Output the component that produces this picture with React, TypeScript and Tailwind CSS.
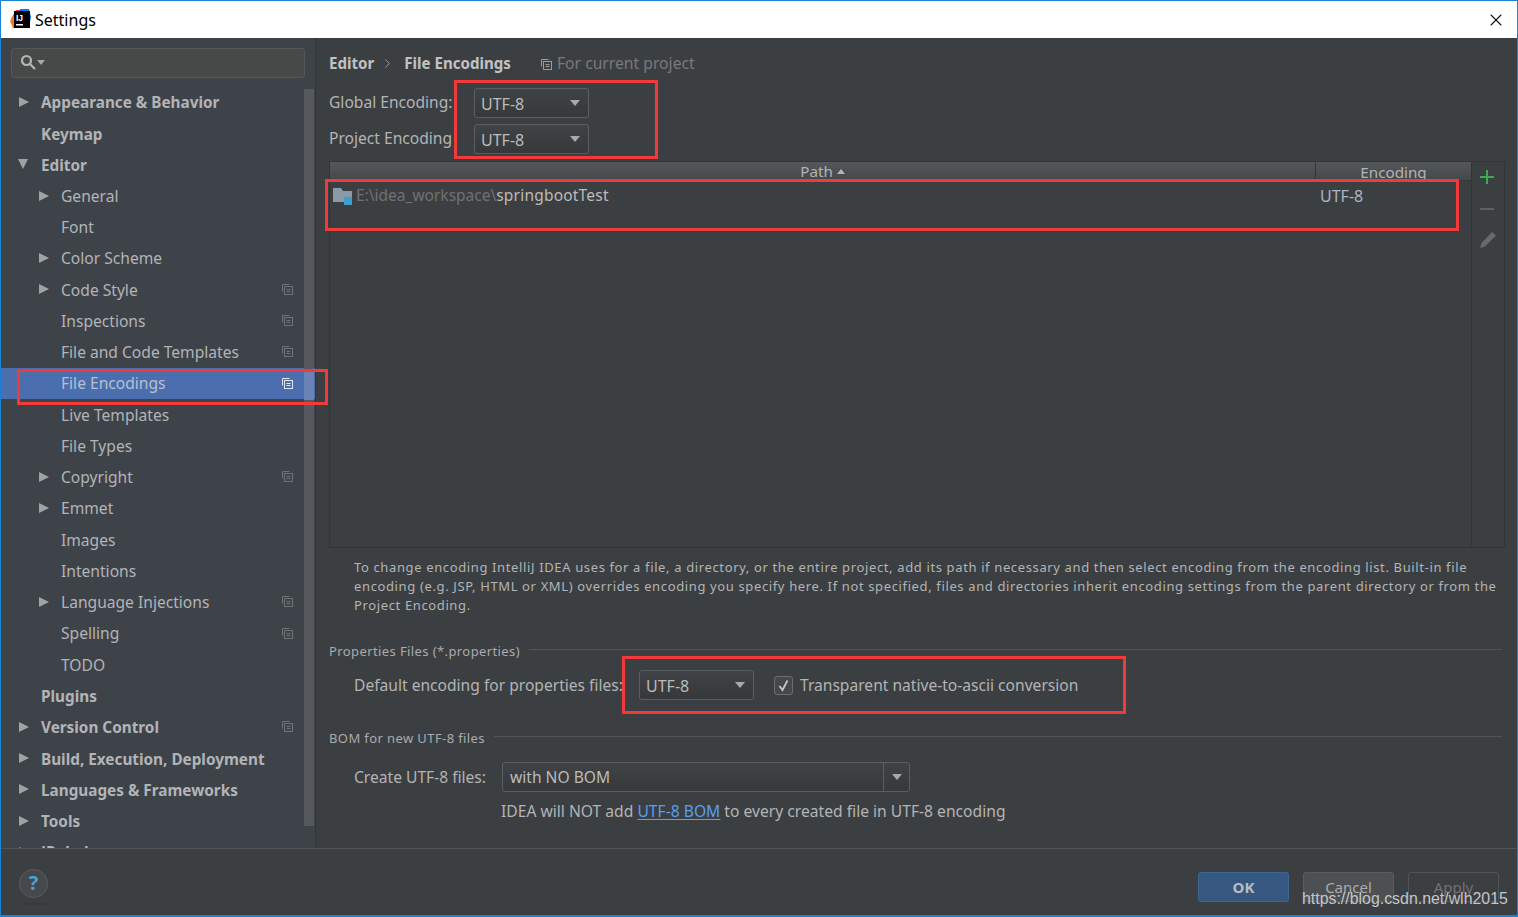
import { ChevronRight, X } from "lucide-react";

const treeRows = [
	{ label: "Appearance & Behavior", level: 0, arrow: "right" },
	{ label: "Keymap", level: 0 },
	{ label: "Editor", level: 0, arrow: "down" },
	{ label: "General", level: 1, arrow: "right" },
	{ label: "Font", level: 1 },
	{ label: "Color Scheme", level: 1, arrow: "right" },
	{ label: "Code Style", level: 1, arrow: "right", copy: true },
	{ label: "Inspections", level: 1, copy: true },
	{ label: "File and Code Templates", level: 1, copy: true },
	{ label: "File Encodings", level: 1, copy: true, selected: true },
	{ label: "Live Templates", level: 1 },
	{ label: "File Types", level: 1 },
	{ label: "Copyright", level: 1, arrow: "right", copy: true },
	{ label: "Emmet", level: 1, arrow: "right" },
	{ label: "Images", level: 1 },
	{ label: "Intentions", level: 1 },
	{ label: "Language Injections", level: 1, arrow: "right", copy: true },
	{ label: "Spelling", level: 1, copy: true },
	{ label: "TODO", level: 1 },
	{ label: "Plugins", level: 0 },
	{ label: "Version Control", level: 0, arrow: "right", copy: true },
	{ label: "Build, Execution, Deployment", level: 0, arrow: "right" },
	{ label: "Languages & Frameworks", level: 0, arrow: "right" },
	{ label: "Tools", level: 0, arrow: "right" },
	{ label: "JRebel", level: 0, arrow: "right" },
];

function CopyIcon({ color = "#6f7376" }: { color?: string }) {
	return (
		<svg width="12" height="12" viewBox="0 0 12 12" fill="none" stroke={color}>
			<path d="M8.5 1.5h-7v7" />
			<rect x="3.5" y="3.5" width="8" height="8" />
			<path d="M5.5 6.5h4M5.5 8.5h4" />
		</svg>
	);
}

function Caret({ color = "#a7a9aa" }: { color?: string }) {
	return <span className="w-0 h-0 border-x-[5px] border-x-transparent border-t-[6px]" style={{ borderTopColor: color }} />;
}

function Combo({ width, label }: { width: string; label: string }) {
	return (
		<div className={`${width} h-[30px] flex items-center justify-between pl-[6px] pr-[8px] rounded-[3px] border border-[#5c5f61] bg-gradient-to-b from-[#404345] to-[#36383a] text-[#bbbbbb] text-[16px]`}>
			<span className="mt-[2px]">{label}</span>
			<Caret />
		</div>
	);
}

function TreeRow({ row }: { row: (typeof treeRows)[number] }) {
	const top = row.level === 0;
	return (
		<div className={`relative h-[31.25px] flex items-center ${row.selected ? "bg-[#4b6eaf]" : ""}`}>
			{row.arrow === "right" && (
				<span className={`absolute ${top ? "left-[18px]" : "left-[38px]"} w-0 h-0 border-y-[5.5px] border-y-transparent border-l-[10px] border-l-[#a0a2a4]`} />
			)}
			{row.arrow === "down" && (
				<span className="absolute left-[17px] w-0 h-0 border-x-[5.5px] border-x-transparent border-t-[10px] border-t-[#a0a2a4]" />
			)}
			<span className={`${top ? "ml-[40px] font-bold text-[15.3px]" : "ml-[60px] text-[15.6px]"} mt-[2px] whitespace-nowrap ${row.selected ? "text-[#b6c0d0]" : "text-[#b2b4b6]"}`}>{row.label}</span>
			{row.copy && (
				<span className="absolute left-[280px] top-[9px]">
					<CopyIcon color={row.selected ? "#e4e8ee" : "#6f7376"} />
				</span>
			)}
		</div>
	);
}

export default function App() {
	return (
		<div className="relative w-[1518px] h-[917px] flex flex-col overflow-hidden border-x-[1px] border-t-[1px] border-b-[2px] border-[#1883d7] bg-[#3c3f41] text-[#bbbbbb]" style={{ fontFamily: '"Noto Sans", "Open Sans", sans-serif' }}>
			<header className="h-[37px] shrink-0 flex items-center bg-white">
				<svg className="ml-[9px]" width="21" height="21" viewBox="0 0 21 21">
					<path d="M1 10 6 1h6L6 19H3z" fill="#fe315d" />
					<path d="M0 12 4 6l4 13H3z" fill="#f97a12" />
					<path d="M10 0h9l2 8-2 11h-9z" fill="#087cfa" />
					<rect x="4" y="2" width="16" height="17" fill="#000" />
					<rect x="6" y="15" width="7" height="1.5" fill="#fff" />
					<text x="6" y="12" fontSize="8.5" fontWeight="700" fill="#fff" fontFamily="Liberation Sans">IJ</text>
				</svg>
				<span className="ml-[4px] text-[16px] text-black">Settings</span>
				<X className="ml-auto mr-[11px]" size={20} strokeWidth={1.3} color="#111" />
			</header>

			<div className="flex-1 min-h-0 flex">
				<aside className="relative w-[315px] shrink-0 bg-[#3e434a] border-r border-[#333537] overflow-hidden">
					<div className="mx-[10px] mt-[10px] h-[30px] flex items-center gap-[1px] pl-[8px] pb-[2px] rounded-[3px] border border-[#54585a] bg-[#464948]">
						<svg width="16" height="16" viewBox="0 0 16 16" fill="none" stroke="#b4b6b8" strokeWidth="2.2">
							<circle cx="6.5" cy="6.5" r="4.5" />
							<path d="m10 10 5 5" />
						</svg>
						<span className="w-0 h-0 border-x-[4px] border-x-transparent border-t-[5px] border-t-[#a7a9aa]" />
					</div>
					<nav className="mt-[8.25px] w-[314px]">
						{treeRows.map((row) => (
							<TreeRow key={row.label} row={row} />
						))}
					</nav>
					<div className="absolute left-[303px] top-[51px] w-[10px] h-[737px] bg-[#55585e]" />
					<div className="absolute left-[303px] top-[331px] w-[10px] h-[31px] bg-[#6a83b4]" />
				</aside>

				<main className="flex-1 min-w-0 pl-[13px] pr-[13px]">
					<div className="h-[50px] flex items-center pt-[1px] text-[15.1px]">
						<span className="font-bold text-[#c0c2c3]">Editor</span>
						<ChevronRight className="ml-[6px] mr-[9px]" size={15} strokeWidth={1.4} color="#a0a2a4" />
						<span className="font-bold text-[#c0c2c3]">File Encodings</span>
						<span className="ml-[29px] mr-[5px]"><CopyIcon color="#9a9c9e" /></span>
						<span className="text-[15.7px] text-[#77797b]">For current project</span>
					</div>
					<div className="flex items-center h-[30px]">
						<span className="w-[145px] text-[15.6px] text-[#b2b4b6] whitespace-nowrap">Global Encoding:</span>
						<Combo width="w-[115px]" label="UTF-8" />
					</div>
					<div className="flex items-center h-[30px] mt-[6px]">
						<span className="w-[145px] text-[15.6px] text-[#b2b4b6] whitespace-nowrap">Project Encoding</span>
						<Combo width="w-[115px]" label="UTF-8" />
					</div>

					<div className="mt-[7px] h-[387px] w-[1176px] flex border border-[#333537]">
						<div className="flex-1 min-w-0 flex flex-col">
							<div className="h-[19px] shrink-0 flex bg-gradient-to-b from-[#55585a] to-[#45484a] border-b border-[#333537] text-[15.2px] leading-[20px] text-[#b2b4b6]">
								<div className="w-[986px] flex items-center justify-center gap-[4px] border-r border-[#333537]">
									<span>Path</span>
									<span className="w-0 h-0 border-x-[4.5px] border-x-transparent border-b-[5px] border-b-[#b2b4b6]" />
								</div>
								<div className="flex-1 text-center">Encoding</div>
							</div>
							<div className="flex h-[30px] items-center text-[15.5px]">
								<svg className="ml-[3px]" width="20" height="18" viewBox="0 0 20 18">
									<path d="M0 1h8l2 3h9v11H0z" fill="#8a9aa6" />
									<rect x="11" y="10" width="8" height="8" fill="#3aa0d0" />
								</svg>
								<span className="ml-[3px] text-[#6f7174]">E:\idea_workspace\</span>
								<span className="text-[#bbbbbb] tracking-[0.2px]">springbootTest</span>
								<span className="ml-auto mr-[107px] -mt-[1px] w-[44px] text-[16px] text-[#a9b7c6] whitespace-nowrap">UTF-8</span>
							</div>
						</div>
						<div className="w-[33px] shrink-0 flex flex-col items-center border-l border-[#333537]">
							<svg className="mt-[7px] -ml-[2px]" width="16" height="16" viewBox="0 0 16 16" stroke="#3daa52" strokeWidth="2">
								<path d="M8 1v14M1 8h14" />
							</svg>
							<svg className="mt-[16px] -ml-[2px]" width="16" height="16" viewBox="0 0 16 16" stroke="#5f6264" strokeWidth="2">
								<path d="M1 8h14" />
							</svg>
							<svg className="mt-[15px]" width="16" height="16" viewBox="0 0 16 16" fill="#67696b">
								<path d="M12 0l4 3.500L5 14.500 0 16l1.500-5z" />
							</svg>
						</div>
					</div>

					<p className="mt-[10px] ml-[25px] w-[1150px] text-[13px] leading-[19px] tracking-[0.63px] text-[#b2b4b6]">
						To change encoding IntelliJ IDEA uses for a file, a directory, or the entire project, add its path if necessary and then select encoding from the encoding list. Built-in file encoding (e.g. JSP, HTML or XML) overrides encoding you specify here. If not specified, files and directories inherit encoding settings from the parent directory or from the Project Encoding.
					</p>

					<div className="mt-[27px] w-[1173px] flex items-center gap-[9px] h-[20px]">
						<span className="text-[13px] tracking-[0.4px] text-[#a9abad] whitespace-nowrap">Properties Files (*.properties)</span>
						<div className="flex-1 -mt-[6px] h-px bg-[#515355]" />
					</div>
					<div className="mt-[8px] ml-[25px] flex items-center h-[30px] text-[15.6px]">
						<span className="w-[285px] mt-[2px] whitespace-nowrap text-[#b2b4b6]">Default encoding for properties files:</span>
						<Combo width="w-[115px]" label="UTF-8" />
						<span className="ml-[20px] w-[19px] h-[19px] flex items-center justify-center rounded-[3px] border border-[#6b6e70] bg-[#45484a]">
							<svg width="13" height="13" viewBox="0 0 13 13" fill="none" stroke="#c4c6c8" strokeWidth="1.800">
								<path d="M2.500 7 5.500 11 10.500 1.500" />
							</svg>
						</span>
						<span className="ml-[7px] mt-[2px] text-[#b2b4b6]">Transparent native-to-ascii conversion</span>
					</div>

					<div className="mt-[29px] w-[1173px] flex items-center gap-[9px] h-[20px]">
						<span className="text-[13px] tracking-[0.4px] text-[#a9abad] whitespace-nowrap">BOM for new UTF-8 files</span>
						<div className="flex-1 -mt-[6px] h-px bg-[#515355]" />
					</div>
					<div className="mt-[13px] ml-[25px] flex items-center h-[30px] text-[15.6px]">
						<span className="w-[148px] mt-[2px] whitespace-nowrap text-[#b2b4b6]">Create UTF-8 files:</span>
						<div className="w-[408px] h-[30px] flex rounded-[3px] border border-[#5c5f61] bg-gradient-to-b from-[#404345] to-[#36383a]">
							<span className="flex-1 pl-[7px] leading-[29px]">with NO BOM</span>
							<span className="w-[26px] flex items-center justify-center border-l border-[#5c5f61]"><Caret /></span>
						</div>
					</div>
					<div className="mt-[6px] ml-[172px] text-[15.65px] leading-[26px] text-[#b2b4b6] whitespace-nowrap">
						IDEA will NOT add <span className="text-[#589df6] underline underline-offset-2">UTF-8 BOM</span> to every created file in UTF-8 encoding
					</div>
				</main>
			</div>

			<footer className="relative z-10 h-[67px] shrink-0 flex items-center bg-[#3c3f41] border-t border-[#515355]">
				<span className="ml-[18px] mt-[2px] w-[29px] h-[29px] flex items-center justify-center rounded-full border border-[#5a5d5f] bg-[#46494b] font-bold text-[20px] text-[#4b9fd5]">?</span>
				<span className="absolute left-[19px] top-[54px] w-[28px] h-[2px] bg-[#37393b]" />
				<div className="ml-auto mr-[18px] mt-[10px] flex gap-[14px] text-[15px]">
					<span className="w-[91px] h-[30px] flex items-center justify-center rounded-[3px] border border-[#3f6595] bg-[#365880] font-bold text-[#b9bdc2]">OK</span>
					<span className="w-[91px] h-[30px] flex items-center justify-center rounded-[3px] border border-[#5a5d5f] bg-[#4c5052] text-[#a9abad]">Cancel</span>
					<span className="w-[91px] h-[30px] flex items-center justify-center rounded-[3px] border border-[#515355] text-[#6f7174]">Apply</span>
				</div>
			</footer>

			{/* annotations drawn over the screenshot */}
			<div className="absolute z-20 left-[453px] top-[79px] w-[204px] h-[79px] border-[3px] border-[#f23a3a]" />
			<div className="absolute z-20 left-[324px] top-[178px] w-[1134px] h-[52px] border-[3px] border-[#f23a3a]" />
			<div className="absolute z-20 left-[16px] top-[368px] w-[311px] h-[36px] border-[3px] border-[#f23a3a]" />
			<div className="absolute z-20 left-[621px] top-[655px] w-[504px] h-[58px] border-[3px] border-[#f23a3a]" />
			<span className="absolute z-20 left-[1301px] top-[888px] text-[15.9px] leading-[20px] text-[#c4c6c8]" style={{ fontFamily: '"Liberation Sans", sans-serif' }}>https://blog.csdn.net/wlh2015</span>
		</div>
	);
}
